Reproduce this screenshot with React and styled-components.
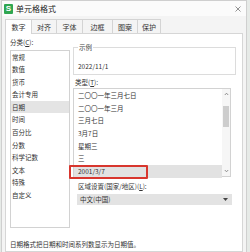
import React from 'react';
import styled, { createGlobalStyle } from 'styled-components';

const GlobalStyle = createGlobalStyle`
  html, body {
    margin: 0;
    padding: 0;
    background: #e6eae7;
  }
  body {
    font-family: "Noto Sans CJK SC", "Noto Sans", sans-serif;
    color: #333;
  }
`;

// Ventana del cuadro de diálogo
const Dialog = styled.div`
  width: 246px;
  height: 252px;
  box-sizing: border-box;
  margin-left: 1px;
  background: #f4f4f4;
  border: 1px solid #cfcfcf;
  border-bottom: none;
  display: flex;
  flex-direction: column;
  overflow: hidden;
`;

const TitleBar = styled.div`
  height: 15px;
  flex: none;
  display: flex;
  align-items: center;
  padding: 0 4px 0 2px;
  background: #fbfbfb;
`;

const AppIcon = styled.div`
  width: 9px;
  height: 10px;
  border-radius: 1px;
  background: #2fa650;
  color: #fff;
  font-family: "Liberation Sans", sans-serif;
  font-weight: bold;
  font-size: 8px;
  line-height: 10px;
  text-align: center;
`;

const Title = styled.div`
  margin-left: 3px;
  font-size: 8px;
  line-height: 10px;
  color: #222;
  flex: 1;
`;

const Close = styled.div`
  width: 8px;
  height: 8px;
  display: flex;
  align-items: center;
  justify-content: center;
`;

// Pestañas
const Tabs = styled.div`
  display: flex;
  align-items: flex-end;
  margin-top: 2px;
  padding-left: 3px;
  height: 15px;
  flex: none;
`;

const Tab = styled.div`
  width: ${p => p.$w}px;
  height: ${p => (p.$active ? 15 : 14)}px;
  box-sizing: border-box;
  display: flex;
  align-items: center;
  justify-content: center;
  font-size: 7px;
  color: #333;
  background: ${p => (p.$active ? '#fff' : '#f4f4f4')};
  border: 1px solid #d4d4d4;
  border-bottom: none;
  border-left: ${p => (p.$first || p.$active ? '1px solid #d4d4d4' : 'none')};
  margin-bottom: ${p => (p.$active ? '-1px' : '0')};
  position: relative;
  z-index: ${p => (p.$active ? 1 : 0)};
`;

// Panel principal
const Panel = styled.div`
  flex: 1;
  margin: 0 3px;
  background: #fff;
  border: 1px solid #d6d6d6;
  padding: 3px 4px 0 4px;
  display: grid;
  grid-template-columns: 60px 1fr;
  column-gap: 3px;
  align-content: start;
  font-size: 6.5px;
`;

const Column = styled.div`
  display: flex;
  flex-direction: column;
`;

const Label = styled.div`
  line-height: 9px;
  height: 9px;
  white-space: nowrap;
  margin-top: ${p => p.$mt || 0}px;
  padding-left: ${p => p.$pl || 0}px;
`;

const CategoryList = styled.div`
  margin-top: 3px;
  height: 178px;
  box-sizing: border-box;
  border: 1px solid #d2d2d2;
`;

const CategoryItem = styled.div`
  height: 12.6px;
  line-height: 12.6px;
  padding-left: 1px;
  background: ${p => (p.$selected ? '#e4e4e4' : 'transparent')};
  white-space: nowrap;
`;

const Sample = styled.fieldset`
  margin: 6px 2px 0 0;
  padding: 0 4px 3px 4px;
  border: 1px solid #dcdcdc;
  min-width: 0;
`;

const Legend = styled.legend`
  padding: 0 1px;
  line-height: 9px;
  font-size: 6.5px;
  color: #444;
`;

const SampleValue = styled.div`
  margin-top: 10px;
  line-height: 9px;
`;

const TypeList = styled.div`
  margin-top: 1.5px;
  width: 158px;
  height: 89px;
  box-sizing: border-box;
  border: 1px solid #d2d2d2;
  display: flex;
`;

const TypeItems = styled.div`
  flex: 1;
`;

const TypeItem = styled.div`
  height: 12.7px;
  line-height: 12.7px;
  padding-left: 4px;
  white-space: nowrap;
  background: ${p => (p.$selected ? '#e2e2e2' : 'transparent')};
  position: relative;
`;

// Recuadro rojo de resaltado sobre la fila
const Highlight = styled.div`
  position: absolute;
  left: -5px;
  top: 0;
  width: 79px;
  height: 14px;
  box-sizing: border-box;
  border: 2px solid #d8362e;
  border-radius: 1px;
`;

const Scrollbar = styled.div`
  width: 8px;
  background: #f6f6f6;
  display: flex;
  flex-direction: column;
  align-items: center;
`;

const ScrollArrow = styled.div`
  height: 10px;
  display: flex;
  align-items: center;
  justify-content: center;
  margin-top: ${p => (p.$down ? 'auto' : '0')};
`;

const Thumb = styled.div`
  width: 6px;
  height: 21px;
  margin-top: 7px;
  background: #cdcdcd;
`;

const Select = styled.div`
  margin: 3.5px 0 0 4px;
  width: 155px;
  height: 11px;
  box-sizing: border-box;
  background: #e3e3e3;
  display: flex;
  align-items: center;
  padding: 0 4px 0 3px;
`;

const SelectText = styled.div`
  flex: 1;
  line-height: 9px;
`;

const Description = styled.div`
  grid-column: 1 / 3;
  margin-top: 12.5px;
  line-height: 9px;
  white-space: nowrap;
`;

const Chevron = ({ down }) => (
  <svg width="5" height="4" viewBox="0 0 5 4">
    <path d={down ? 'M0.8 1 L2.5 2.8 L4.2 1' : 'M0.8 3 L2.5 1.2 L4.2 3'} fill="none" stroke="#777" strokeWidth="0.8" />
  </svg>
);

const categories = ['常规', '数值', '货币', '会计专用', '日期', '时间', '百分比', '分数', '科学记数', '文本', '特殊', '自定义'];
const types = ['二〇〇一年三月七日', '二〇〇一年三月', '三月七日', '3月7日', '星期三', '三', '2001/3/7'];
const tabs = [
  { name: '数字', w: 27 },
  { name: '对齐', w: 25 },
  { name: '字体', w: 26 },
  { name: '边框', w: 30 },
  { name: '图案', w: 25 },
  { name: '保护', w: 23 },
];

const App = () => {
  return (
    <>
      <GlobalStyle />
      <Dialog>
        <TitleBar>
          <AppIcon>S</AppIcon>
          <Title>单元格格式</Title>
          <Close>
            <svg width="6" height="6" viewBox="0 0 6 6">
              <path d="M0.5 0.5 L5.5 5.5 M5.5 0.5 L0.5 5.5" stroke="#777" strokeWidth="0.8" />
            </svg>
          </Close>
        </TitleBar>
        <Tabs>
          {tabs.map((t, i) => (
            <Tab key={t.name} $w={t.w} $active={i === 0} $first={i === 0}>{t.name}</Tab>
          ))}
        </Tabs>
        <Panel>
          <Column>
            <Label $mt={0.5}>分类(<u>C</u>):</Label>
            <CategoryList>
              {categories.map(c => (
                <CategoryItem key={c} $selected={c === '日期'}>{c}</CategoryItem>
              ))}
            </CategoryList>
          </Column>
          <Column>
            <Sample>
              <Legend>示例</Legend>
              <SampleValue>2022/11/1</SampleValue>
            </Sample>
            <Label $mt={2.5} $pl={2}>类型(<u>T</u>):</Label>
            <TypeList>
              <TypeItems>
                {types.map((t, i) => (
                  <TypeItem key={i} $selected={i === types.length - 1}>
                    {t}
                    {i === types.length - 1 && <Highlight />}
                  </TypeItem>
                ))}
              </TypeItems>
              <Scrollbar>
                <ScrollArrow><Chevron /></ScrollArrow>
                <Thumb />
                <ScrollArrow $down><Chevron down /></ScrollArrow>
              </Scrollbar>
            </TypeList>
            <Label $mt={4.5} $pl={5}>区域设置(国家/地区)(<u>L</u>):</Label>
            <Select>
              <SelectText>中文(中国)</SelectText>
              <svg width="5" height="3" viewBox="0 0 5 3">
                <path d="M0 0 L5 0 L2.5 3 Z" fill="#444" />
              </svg>
            </Select>
          </Column>
          <Description>日期格式把日期和时间系列数显示为日期值。</Description>
        </Panel>
      </Dialog>
    </>
  );
};

export default App;
